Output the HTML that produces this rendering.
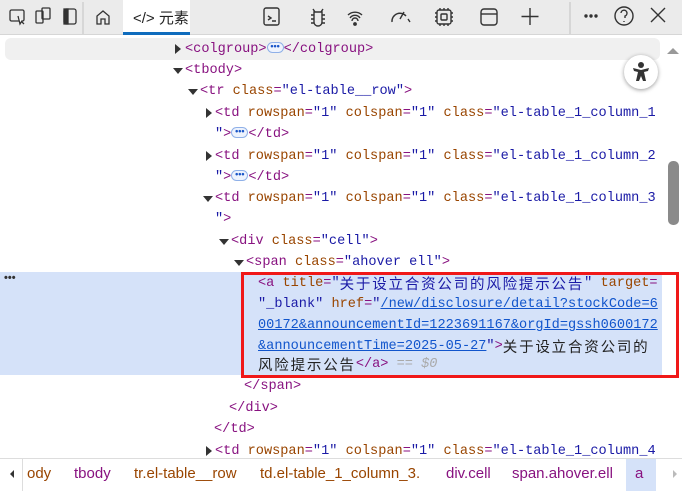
<!DOCTYPE html>
<html><head><meta charset="utf-8"><style>
*{margin:0;padding:0;box-sizing:border-box}
body{width:682px;height:491px;overflow:hidden;background:#fff;font-family:"Liberation Mono","Noto Sans CJK SC",monospace;font-size:13.6px;position:relative}
.tb{position:absolute;left:0;top:0;width:682px;height:35px;background:#ebebeb;border-bottom:1px solid #d6d6d6}
.l{position:absolute;height:21px;line-height:21px;white-space:pre}
.t{color:#881280}.n{color:#994500}.v{color:#1a1aa6}.k{text-decoration:underline;color:#1155cc}
.ar{display:inline-block;width:0;height:0;position:absolute}
.ar.r{border-top:5px solid transparent;border-bottom:5px solid transparent;border-left:6px solid #333}
.ar.d{border-left:5px solid transparent;border-right:5px solid transparent;border-top:6px solid #333}
.dots{display:inline-block;width:17px;height:11px;border:1px solid #8fb0e8;border-radius:6px;background:#eef3fd;vertical-align:middle;position:relative;top:-1px;color:#1a56c8;font-size:9px;line-height:7px;text-align:center;font-family:"Liberation Sans",sans-serif;font-weight:bold}
.cj{font-family:"Noto Sans CJK SC",sans-serif;font-size:14.5px;letter-spacing:1.8px;display:inline-block;height:21px;line-height:21px;vertical-align:top}
.cjb{color:#222}
</style></head><body>
<div class="tb">
<svg width="682" height="35" viewBox="0 0 682 35" fill="none" stroke="#333" stroke-width="1.3" style="position:absolute;left:0;top:0">
<rect x="10" y="10" width="14" height="11" rx="1.5"/><path d="M18 16l2 8 1.5-2.5 2.5 2.5" fill="#fff"/>
<rect x="36" y="11" width="7" height="12" rx="1"/><rect x="42" y="8" width="8" height="11" rx="1"/>
<rect x="64" y="9" width="12" height="15" rx="2"/><rect x="64" y="9" width="4" height="15" fill="#333"/>
<line x1="83" y1="2" x2="83" y2="34" stroke="#ccc"/>
<path d="M97 24v-8l6-5 6 5v8h-4v-5h-4v5z"/>
</svg>
<div style="position:absolute;left:123px;top:0;width:67px;height:35px;background:#fff;border-bottom:3px solid #0f6cbd"></div>
<div style="position:absolute;left:133px;top:7px;font-family:'Liberation Sans','Noto Sans CJK SC',sans-serif;font-size:15px;color:#222;white-space:nowrap">&lt;/&gt; 元素</div>
<svg width="682" height="35" viewBox="0 0 682 35" fill="none" stroke="#333" stroke-width="1.4" style="position:absolute;left:0;top:0">
<rect x="264" y="8" width="15" height="17" rx="2"/><path d="M268 16l3 2-3 2M272 21h4"/>
<path d="M314 12h8v10a4 4 0 0 1-8 0zM314 15h-3M322 15h3M314 19h-3M322 19h3M314 23h-3M322 23h3M315 12l-2-3M321 12l2-3"/>
<path d="M348 15a10 10 0 0 1 14 0M350 18a6 6 0 0 1 10 0M352 21a3 3 0 0 1 6 0"/><circle cx="355" cy="24" r="1.2" fill="#333"/>
<path d="M392 22a8 8 0 0 1 14-6M400 19l4-7M408 19l2 3"/>
<rect x="437" y="10" width="14" height="14" rx="2"/><rect x="441" y="14" width="6" height="6" rx="1"/><path d="M440 8v2M444 8v2M448 8v2M440 24v2M444 24v2M448 24v2M435 13h2M435 17h2M435 21h2M451 13h2M451 17h2M451 21h2"/>
<rect x="481" y="9" width="16" height="16" rx="3"/><path d="M481 14h16"/>
<path d="M530 8v17M521.5 16.5h17"/>
<line x1="570" y1="2" x2="570" y2="34" stroke="#ccc"/>
<circle cx="586" cy="16" r="1" fill="#333"/><circle cx="591" cy="16" r="1" fill="#333"/><circle cx="596" cy="16" r="1" fill="#333"/>
<circle cx="624" cy="16" r="9"/><path d="M621 13a3 3 0 1 1 4 3v2M624 21v1"/>
<path d="M651 8l14 14M665 8l-14 14"/>
</svg>
</div>
<div style="position:absolute;left:5px;top:38px;width:655px;height:22px;background:#f0f0f0;border-radius:6px"></div>
<div style="position:absolute;left:0;top:272px;width:662px;height:103px;background:#d5e2f9"></div>
<div style="position:absolute;left:4px;top:272px;font-size:11px;color:#333;font-family:'Liberation Sans',sans-serif;font-weight:bold">•••</div>

<div class="l" style="left:185px;top:39px"><span class="ar r" style="left:-10px;top:5px"></span><span class="t">&lt;colgroup&gt;</span><span class="dots">•••</span><span class="t">&lt;/colgroup&gt;</span></div>
<div class="l" style="left:185px;top:60px"><span class="ar d" style="left:-12px;top:8px"></span><span class="t">&lt;tbody&gt;</span></div>
<div class="l" style="left:200px;top:81px"><span class="ar d" style="left:-12px;top:8px"></span><span class="t">&lt;tr </span><span class="n">class</span><span class="t">=</span><span class="v">"el-table__row"</span><span class="t">&gt;</span></div>
<div class="l" style="left:215px;top:103px"><span class="ar r" style="left:-9px;top:5px"></span><span class="t">&lt;td </span><span class="n">rowspan</span><span class="t">=</span><span class="v">"1"</span> <span class="n">colspan</span><span class="t">=</span><span class="v">"1"</span> <span class="n">class</span><span class="t">=</span><span class="v">"el-table_1_column_1</span></div>
<div class="l" style="left:215px;top:124px"><span class="v">"</span><span class="t">&gt;</span><span class="dots">•••</span><span class="t">&lt;/td&gt;</span></div>
<div class="l" style="left:215px;top:146px"><span class="ar r" style="left:-9px;top:5px"></span><span class="t">&lt;td </span><span class="n">rowspan</span><span class="t">=</span><span class="v">"1"</span> <span class="n">colspan</span><span class="t">=</span><span class="v">"1"</span> <span class="n">class</span><span class="t">=</span><span class="v">"el-table_1_column_2</span></div>
<div class="l" style="left:215px;top:167px"><span class="v">"</span><span class="t">&gt;</span><span class="dots">•••</span><span class="t">&lt;/td&gt;</span></div>
<div class="l" style="left:215px;top:188px"><span class="ar d" style="left:-12px;top:8px"></span><span class="t">&lt;td </span><span class="n">rowspan</span><span class="t">=</span><span class="v">"1"</span> <span class="n">colspan</span><span class="t">=</span><span class="v">"1"</span> <span class="n">class</span><span class="t">=</span><span class="v">"el-table_1_column_3</span></div>
<div class="l" style="left:215px;top:209px"><span class="v">"</span><span class="t">&gt;</span></div>
<div class="l" style="left:231px;top:231px"><span class="ar d" style="left:-12px;top:8px"></span><span class="t">&lt;div </span><span class="n">class</span><span class="t">=</span><span class="v">"cell"</span><span class="t">&gt;</span></div>
<div class="l" style="left:246px;top:252px"><span class="ar d" style="left:-12px;top:8px"></span><span class="t">&lt;span </span><span class="n">class</span><span class="t">=</span><span class="v">"ahover ell"</span><span class="t">&gt;</span></div>
<div class="l" style="left:258px;top:273px"><span class="t">&lt;a </span><span class="n">title</span><span class="t">=</span><span class="v">"<span class="cj">关于设立合资公司的风险提示公告</span>"</span> <span class="n">target</span><span class="t">=</span></div>
<div class="l" style="left:258px;top:294px"><span class="v">"_blank"</span> <span class="n">href</span><span class="t">=</span><span class="v">"</span><span class="k">/new/disclosure/detail?stockCode=6</span></div>
<div class="l" style="left:258px;top:315px"><span class="k">00172&amp;announcementId=1223691167&amp;orgId=gssh0600172</span></div>
<div class="l" style="left:258px;top:336px"><span class="k">&amp;announcementTime=2025-05-27</span><span class="v">"</span><span class="t">&gt;</span><span class="cj cjb">关于设立合资公司的</span></div>
<div class="l" style="left:258px;top:354px"><span class="cj cjb">风险提示公告</span><span class="t">&lt;/a&gt;</span> <span style="color:#aaa;font-style:italic">== $0</span></div>
<div class="l" style="left:244px;top:376px"><span class="t">&lt;/span&gt;</span></div>
<div class="l" style="left:229px;top:398px"><span class="t">&lt;/div&gt;</span></div>
<div class="l" style="left:214px;top:419px"><span class="t">&lt;/td&gt;</span></div>
<div class="l" style="left:215px;top:441px"><span class="ar r" style="left:-9px;top:5px"></span><span class="t">&lt;td </span><span class="n">rowspan</span><span class="t">=</span><span class="v">"1"</span> <span class="n">colspan</span><span class="t">=</span><span class="v">"1"</span> <span class="n">class</span><span class="t">=</span><span class="v">"el-table_1_column_4</span></div>

<div style="position:absolute;left:624px;top:55px;width:34px;height:34px;border-radius:50%;background:#fff;box-shadow:0 1px 4px rgba(0,0,0,.4)"></div>
<svg style="position:absolute;left:624px;top:55px" width="34" height="34" viewBox="0 0 34 34"><circle cx="17" cy="10" r="3" fill="#333"/><path d="M9 13l8 2 8-2-1 3-4 1 2 9h-3l-2-5-2 5h-3l2-9-4-1z" fill="#333"/></svg>
<div style="position:absolute;left:666px;top:38px;width:16px;height:420px;background:#fff"></div>
<div style="position:absolute;left:667px;top:48px;width:0;height:0;border-left:6px solid transparent;border-right:6px solid transparent;border-bottom:6px solid #999"></div>
<div style="position:absolute;left:668px;top:161px;width:11px;height:64px;border-radius:5px;background:#8a8a8a"></div>
<div style="position:absolute;left:241px;top:272px;width:438px;height:106px;border:3px solid #f01818"></div>

<div style="position:absolute;left:0;top:458px;width:682px;height:33px;background:#fff;border-top:1px solid #ddd;font-family:'Liberation Sans',sans-serif;font-size:15px;line-height:30px;white-space:nowrap">
<div style="position:absolute;left:0;top:0;width:23px;height:32px;border-right:1px solid #ddd"></div>
<div style="position:absolute;left:10px;top:11px;border-top:4px solid transparent;border-bottom:4px solid transparent;border-right:4px solid #333"></div>
<span style="position:absolute;left:27px;color:#994500">ody</span>
<span style="position:absolute;left:74px;color:#881280">tbody</span>
<span style="position:absolute;left:134px;color:#994500">tr.el-table__row</span>
<span style="position:absolute;left:260px;color:#994500">td.el-table_1_column_3.</span>
<span style="position:absolute;left:446px;color:#881280">div.cell</span>
<span style="position:absolute;left:512px;color:#881280">span.ahover.ell</span>
<div style="position:absolute;left:626px;top:0;width:30px;height:32px;background:#d5e2f9"></div>
<span style="position:absolute;left:635px;color:#881280">a</span>
<div style="position:absolute;left:673px;top:11px;border-top:4px solid transparent;border-bottom:4px solid transparent;border-left:4px solid #bbb"></div>
</div>
</body></html>
